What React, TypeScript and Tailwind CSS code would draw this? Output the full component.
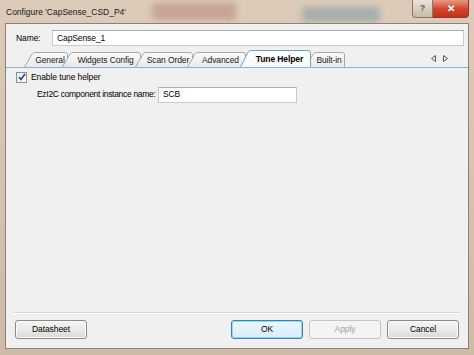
import React from 'react'

const TABS = [
  { label: 'General', w: 44 },
  { label: 'Widgets Config', w: 79 },
  { label: 'Scan Order', w: 58 },
  { label: 'Advanced', w: 59 },
  { label: 'Tune Helper', w: 71, active: true },
  { label: 'Built-in', w: 40 },
]

function Tab({ label, w, active, idx }: { label: string; w: number; active?: boolean; idx: number }) {
  const h = active ? 17 : 15
  const d = `M0.5 ${h} L8.5 1.5 Q9.5 0.5 11 0.5 L${w - 3} 0.5 Q${w - 0.5} 0.5 ${w - 0.5} 3 L${w - 0.5} ${h}`
  const gid = `tabgrad${idx}`
  return (
    <div
      className={`relative flex shrink-0 items-end justify-center whitespace-nowrap pl-[8px] ${idx === 0 ? '' : '-ml-[6px]'} ${
        active ? 'z-10 h-[17px] pb-[4px] font-bold text-black' : 'h-[15px] pb-[3px] text-[#222]'
      }`}
      style={{ width: w }}
    >
      <svg className="absolute inset-0" width={w} height={h} viewBox={`0 0 ${w} ${h}`}>
        <defs>
          <linearGradient id={gid} x1="0" y1="0" x2="0" y2="1">
            <stop offset="0" stopColor={active ? '#ffffff' : '#fbfbfb'} />
            <stop offset="1" stopColor={active ? '#f7f7f7' : '#e8e8e8'} />
          </linearGradient>
        </defs>
        <path d={d} fill={`url(#${gid})`} stroke={active ? '#6d9fd2' : '#a8a8a8'} strokeWidth="1" />
      </svg>
      <span className="relative leading-none">{label}</span>
    </div>
  )
}

function Button({ children, kind }: { children: React.ReactNode; kind?: 'default' | 'disabled' }) {
  const cls =
    kind === 'default'
      ? 'border-[#3c7fb1] bg-gradient-to-b from-[#eaf6fd] to-[#d9eefa] text-black shadow-[inset_0_0_0_1px_#9fd3f2]'
      : kind === 'disabled'
        ? 'border-[#c2c4c6] bg-[#f4f4f4] text-[#a3a3a3]'
        : 'border-[#8a8a8a] bg-gradient-to-b from-[#f3f3f3] via-[#ebebeb] to-[#d7d7d7] text-black shadow-[inset_0_0_0_1px_#fcfcfc]'
  return (
    <div className={`flex h-[19px] w-[72px] items-center justify-center rounded-[3px] border ${cls}`}>
      {children}
    </div>
  )
}

export default function App() {
  return (
    <div
      className="relative flex h-[355px] w-[474px] flex-col overflow-hidden bg-gradient-to-b from-[#dccbb9] to-[#cdbba8] text-[8.5px] tracking-[-0.1px] text-black"
      style={{ fontFamily: '"Liberation Sans", Arial, sans-serif' }}
    >
      {/* blurred aero background */}
      <div className="absolute left-[152px] top-[3px] h-[17px] w-[84px] rounded bg-[#b98a80] opacity-60 blur-[3px]" />
      <div className="absolute left-[302px] top-[7px] h-[15px] w-[78px] rounded bg-[#8fa3a6] opacity-70 blur-[3px]" />

      {/* title bar */}
      <div className="relative flex h-[23px] shrink-0 items-start">
        <div className="pl-[6px] pt-[6px] text-[8.5px] tracking-normal text-[#1a1a1a]">Configure 'CapSense_CSD_P4'</div>
        <div className="ml-auto mr-[5px] flex">
          <div className="flex h-[18px] w-[21px] items-center justify-center rounded-bl-[4px] border border-t-0 border-[#8b7a6a] bg-gradient-to-b from-[#ece3da] to-[#c9b9a9] text-[9px] font-bold text-[#6b5d50]">
            ?
          </div>
          <div className="flex h-[18px] w-[36px] items-center justify-center rounded-br-[4px] border border-l-0 border-t-0 border-[#8b3a2a] bg-gradient-to-b from-[#e49a85] via-[#d6452c] to-[#c0301c] text-[10px] font-bold text-white">
            ✕
          </div>
        </div>
      </div>

      {/* client area */}
      <div className="relative mx-[5px] mb-[6px] flex flex-1 flex-col border border-[#8e8072] bg-[#f0f0f0]">
        {/* name row */}
        <div className="flex items-center pl-[10px] pr-[4px] pt-[6px]">
          <span className="w-[36px]">Name:</span>
          <div className="flex h-[16px] flex-1 items-center border border-[#c5cbd3] border-t-[#abadb3] bg-white pl-[4px]">
            CapSense_1
          </div>
        </div>

        {/* tabs */}
        <div className="relative mt-[5px] flex h-[17px] items-end border-b border-[#8cb0d8] pl-[18px] pr-[20px]">
          {TABS.map((t, i) => (
            <Tab key={t.label} label={t.label} w={t.w} active={t.active} idx={i} />
          ))}
          <div className="ml-auto flex items-center gap-[7px] pb-[5px]">
            <svg width="5" height="7" viewBox="0 0 5 7">
              <path d="M4.5 0.5 L0.5 3.5 L4.5 6.5 Z" fill="none" stroke="#555" />
            </svg>
            <svg width="5" height="7" viewBox="0 0 5 7">
              <path d="M0.5 0.5 L4.5 3.5 L0.5 6.5 Z" fill="none" stroke="#555" />
            </svg>
          </div>
        </div>

        {/* tab content */}
        <div className="flex flex-col pl-[10px] pt-[3px]">
          <div className="flex items-center gap-[4px]">
            <div className="flex h-[11px] w-[11px] items-center justify-center border border-[#8e8f8f] bg-gradient-to-br from-[#e6e6e6] to-white">
              <svg width="8" height="8" viewBox="0 0 8 8">
                <path d="M1 4 L3 6.5 L7 1" fill="none" stroke="#2b3e8c" strokeWidth="1.5" />
              </svg>
            </div>
            <span>Enable tune helper</span>
          </div>
          <div className="mt-[3px] flex items-center pl-[21px]">
            <span className="w-[121px] whitespace-nowrap tracking-[-0.3px]">EzI2C component instance name:</span>
            <div className="flex h-[16px] w-[139px] items-center border border-[#c5cbd3] border-t-[#abadb3] bg-white pl-[4px]">
              SCB
            </div>
          </div>
        </div>

        <div className="flex-1" />

        {/* bottom */}
        <div className="mx-[8px] border-t border-b border-t-[#d5d5d5] border-b-white" />
        <div className="flex items-center px-[9px] pb-[9px] pt-[6px]">
          <Button>Datasheet</Button>
          <div className="ml-auto flex gap-[6px]">
            <Button kind="default">OK</Button>
            <Button kind="disabled">Apply</Button>
            <Button>Cancel</Button>
          </div>
        </div>
      </div>
    </div>
  )
}
